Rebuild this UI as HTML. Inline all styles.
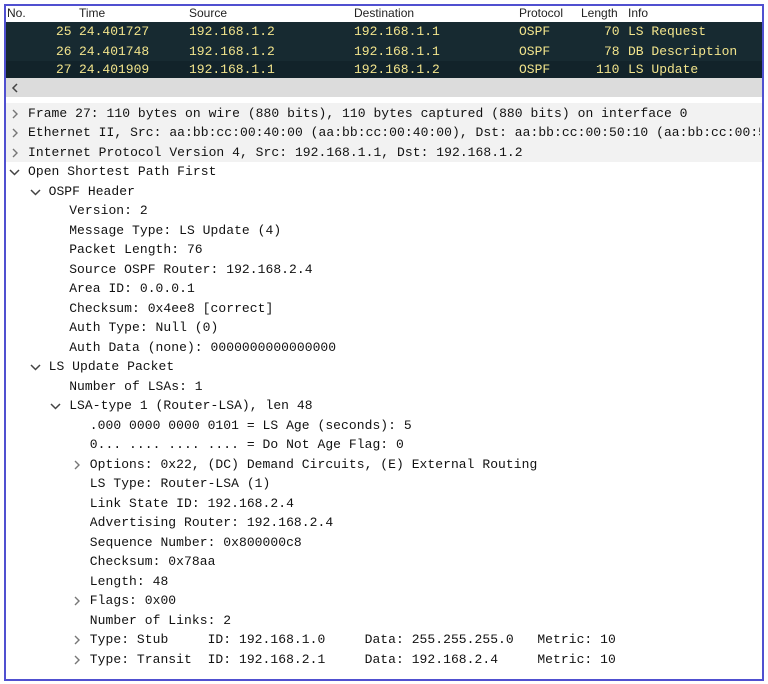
<!DOCTYPE html>
<html><head><style>
body{margin:0;width:768px;height:684px;background:#fff;position:relative;overflow:hidden}
.frame{position:absolute;left:4px;top:4px;width:756px;height:673px;border:2px solid #5050d0;box-sizing:content-box}
.hdr{position:absolute;left:6px;top:6px;width:756px;height:16px;font:12px "Liberation Sans",sans-serif;color:#222}
.hdr span{position:absolute;top:0}
.row{position:absolute;left:6px;width:756px;height:19.5px;background:#172a31;font:13px "Liberation Mono",monospace;color:#f2e48c}
.row span{position:absolute;top:2px;white-space:pre}
.sb{position:absolute;left:6px;top:78px;width:756px;height:19px;background:#dcdcdc;font:14px "Liberation Sans",sans-serif;color:#555}
.d{position:absolute;font:13px "Liberation Mono",monospace;color:#111;white-space:pre;height:19.5px;line-height:19.5px;letter-spacing:0.05px}
.g{position:absolute;left:6px;width:756px;height:19.5px;background:#f2f2f2}
</style></head><body>
<div class="frame"></div>
<div class="hdr"><span style="left:1px">No.</span><span style="left:73px">Time</span><span style="left:183px">Source</span><span style="left:348px">Destination</span><span style="left:513px">Protocol</span><span style="left:575px">Length</span><span style="left:622px">Info</span></div>
<div class="row" style="top:22px"><span style="left:50px">25</span><span style="left:73px">24.401727</span><span style="left:183px">192.168.1.2</span><span style="left:348px">192.168.1.1</span><span style="left:513px">OSPF</span><span style="left:598px">70</span><span style="left:622px">LS Request</span></div>
<div class="row" style="top:41.5px"><span style="left:50px">26</span><span style="left:73px">24.401748</span><span style="left:183px">192.168.1.2</span><span style="left:348px">192.168.1.1</span><span style="left:513px">OSPF</span><span style="left:598px">78</span><span style="left:622px">DB Description</span></div>
<div class="row" style="top:61px;height:17px;background:#12232a"><span style="left:50px;top:1px">27</span><span style="left:73px;top:1px">24.401909</span><span style="left:183px;top:1px">192.168.1.1</span><span style="left:348px;top:1px">192.168.1.2</span><span style="left:513px;top:1px">OSPF</span><span style="left:590px;top:1px">110</span><span style="left:622px;top:1px">LS Update</span></div>
<div class="sb"><svg style="position:absolute;left:5px;top:5px" width="8" height="10"><path d="M6 1L2 5L6 9" fill="none" stroke="#444" stroke-width="1.5"/></svg></div>
<div class="g" style="top:103px;height:59px"></div>
<div id="t"></div>
<script>
var L=[[0,'>','Frame 27: 110 bytes on wire (880 bits), 110 bytes captured (880 bits) on interface 0'],
[0,'>','Ethernet II, Src: aa:bb:cc:00:40:00 (aa:bb:cc:00:40:00), Dst: aa:bb:cc:00:50:10 (aa:bb:cc:00:50:10)'],
[0,'>','Internet Protocol Version 4, Src: 192.168.1.1, Dst: 192.168.1.2'],
[0,'v','Open Shortest Path First'],
[1,'v','OSPF Header'],
[2,'','Version: 2'],[2,'','Message Type: LS Update (4)'],[2,'','Packet Length: 76'],[2,'','Source OSPF Router: 192.168.2.4'],[2,'','Area ID: 0.0.0.1'],[2,'','Checksum: 0x4ee8 [correct]'],[2,'','Auth Type: Null (0)'],[2,'','Auth Data (none): 0000000000000000'],
[1,'v','LS Update Packet'],[2,'','Number of LSAs: 1'],[2,'v','LSA-type 1 (Router-LSA), len 48'],
[3,'','.000 0000 0000 0101 = LS Age (seconds): 5'],[3,'','0... .... .... .... = Do Not Age Flag: 0'],
[3,'>','Options: 0x22, (DC) Demand Circuits, (E) External Routing'],
[3,'','LS Type: Router-LSA (1)'],[3,'','Link State ID: 192.168.2.4'],[3,'','Advertising Router: 192.168.2.4'],[3,'','Sequence Number: 0x800000c8'],[3,'','Checksum: 0x78aa'],[3,'','Length: 48'],
[3,'>','Flags: 0x00'],[3,'','Number of Links: 2'],
[3,'>','Type: Stub     ID: 192.168.1.0     Data: 255.255.255.0   Metric: 10'],
[3,'>','Type: Transit  ID: 192.168.2.1     Data: 192.168.2.4     Metric: 10']];
var h='';L.forEach(function(l,i){var y=103.5+i*19.5,x=28+l[0]*20.6;
h+='<div class="d" style="left:'+x+'px;top:'+y+'px;width:'+(760-x)+'px;overflow:hidden">'+l[2]+'</div>';
if(l[1]=='>')h+='<svg style="position:absolute;left:'+(x-17)+'px;top:'+(y+5)+'px" width="8" height="10"><path d="M2 1L6 5L2 9" fill="none" stroke="#777" stroke-width="1.4"/></svg>';
if(l[1]=='v')h+='<svg style="position:absolute;left:'+(x-19)+'px;top:'+(y+6)+'px" width="11" height="8"><path d="M1 2L5.5 6.5L10 2" fill="none" stroke="#444" stroke-width="1.5"/></svg>';});
document.getElementById('t').innerHTML=h;
</script>
</body></html>
